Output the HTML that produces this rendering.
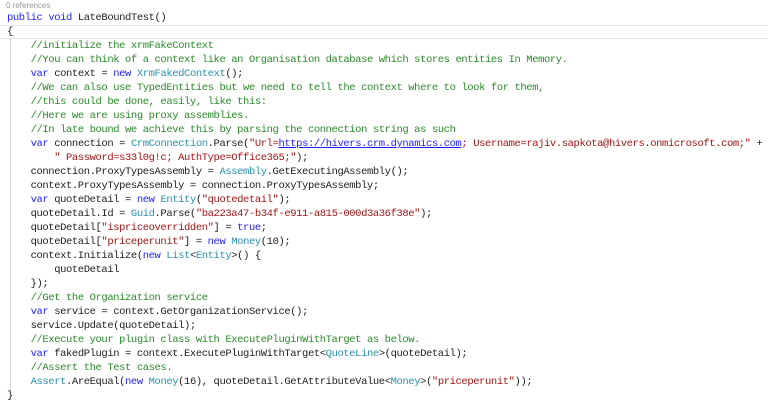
<!DOCTYPE html>
<html><head><meta charset="utf-8"><style>
html,body{margin:0;padding:0;background:#fff;width:768px;height:412px;overflow:hidden}
.ref{position:absolute;left:6px;top:1px;font:8px "Liberation Sans",sans-serif;color:#999}
.hl{position:absolute;left:0;top:25px;width:768px;height:12px;border-top:1px solid #e6e6e6;border-bottom:1px solid #e6e6e6}
.guide{position:absolute;left:10px;top:39px;height:352px;border-left:1px dotted #bbb}
pre{position:absolute;left:7px;top:11px;margin:0;font:10.5px/14px "Liberation Mono",monospace;letter-spacing:-0.4px;color:#1e1e1e}
.k{color:#1f1fff}.t{color:#2b91af}.s{color:#a31515}.c{color:#2a8a2a}.u{color:#1f1fff;text-decoration:underline}
</style></head><body>
<div class="ref">0 references</div>
<div class="hl"></div>
<div class="guide"></div>
<pre><span class="k">public</span> <span class="k">void</span> LateBoundTest()
{
    <span class="c">//initialize the xrmFakeContext</span>
    <span class="c">//You can think of a context like an Organisation database which stores entities In Memory.</span>
    <span class="k">var</span> context = <span class="k">new</span> <span class="t">XrmFakedContext</span>();
    <span class="c">//We can also use TypedEntities but we need to tell the context where to look for them,</span>
    <span class="c">//this could be done, easily, like this:</span>
    <span class="c">//Here we are using proxy assemblies.</span>
    <span class="c">//In late bound we achieve this by parsing the connection string as such</span>
    <span class="k">var</span> connection = <span class="t">CrmConnection</span>.Parse(<span class="s">"Url=</span><span class="u">https://hivers.crm.dynamics.com</span><span class="s">; Username=rajiv.sapkota@hivers.onmicrosoft.com;"</span> +
        <span class="s">" Password=s33l0g!c; AuthType=Office365;"</span>);
    connection.ProxyTypesAssembly = <span class="t">Assembly</span>.GetExecutingAssembly();
    context.ProxyTypesAssembly = connection.ProxyTypesAssembly;
    <span class="k">var</span> quoteDetail = <span class="k">new</span> <span class="t">Entity</span>(<span class="s">"quotedetail"</span>);
    quoteDetail.Id = <span class="t">Guid</span>.Parse(<span class="s">"ba223a47-b34f-e911-a815-000d3a36f38e"</span>);
    quoteDetail[<span class="s">"ispriceoverridden"</span>] = <span class="k">true</span>;
    quoteDetail[<span class="s">"priceperunit"</span>] = <span class="k">new</span> <span class="t">Money</span>(10);
    context.Initialize(<span class="k">new</span> <span class="t">List</span>&lt;<span class="t">Entity</span>&gt;() {
        quoteDetail
    });
    <span class="c">//Get the Organization service</span>
    <span class="k">var</span> service = context.GetOrganizationService();
    service.Update(quoteDetail);
    <span class="c">//Execute your plugin class with ExecutePluginWithTarget as below.</span>
    <span class="k">var</span> fakedPlugin = context.ExecutePluginWithTarget&lt;<span class="t">QuoteLine</span>&gt;(quoteDetail);
    <span class="c">//Assert the Test cases.</span>
    <span class="t">Assert</span>.AreEqual(<span class="k">new</span> <span class="t">Money</span>(16), quoteDetail.GetAttributeValue&lt;<span class="t">Money</span>&gt;(<span class="s">"priceperunit"</span>));
}</pre>
</body></html>
